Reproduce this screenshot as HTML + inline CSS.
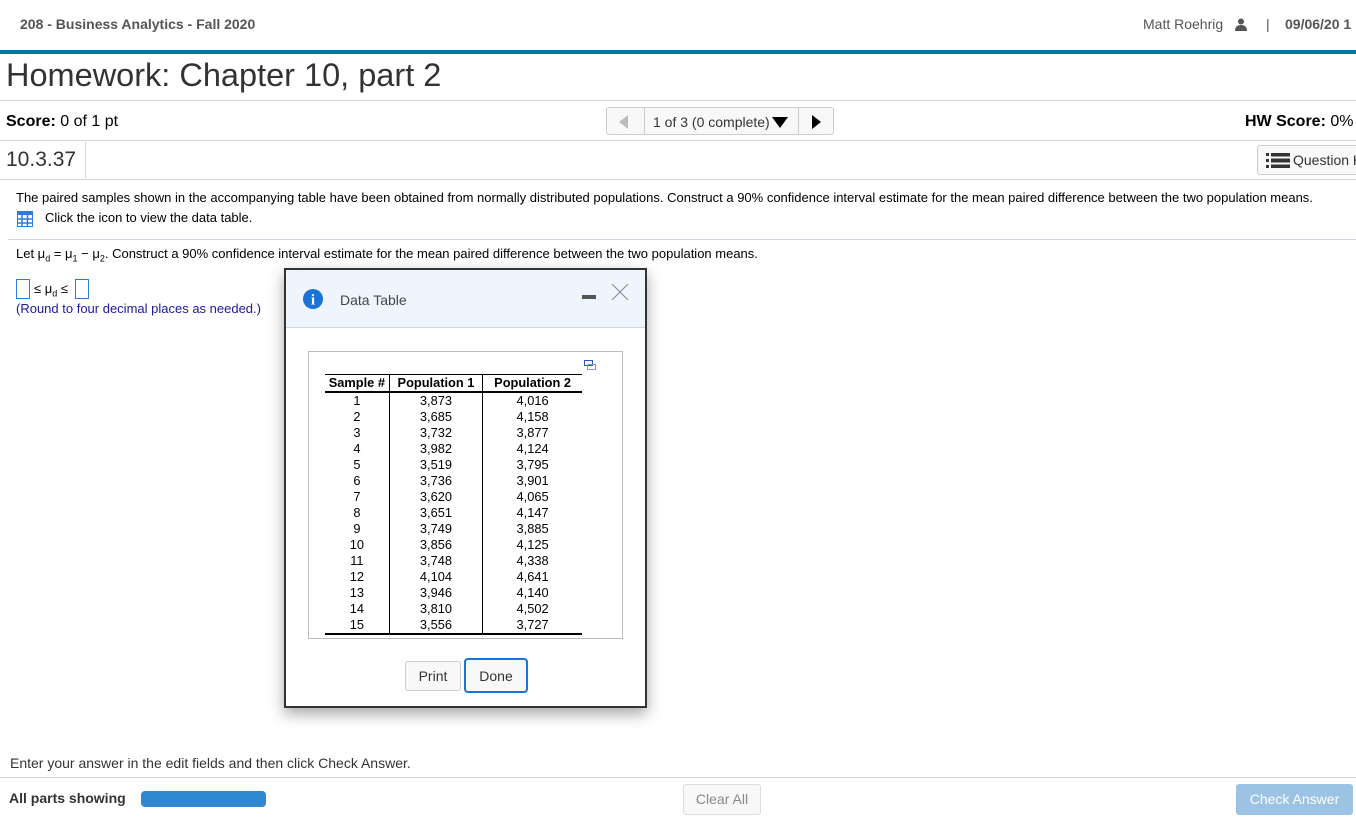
<!DOCTYPE html>
<html><head><meta charset="utf-8"><style>
*{margin:0;padding:0;box-sizing:border-box}
body{width:1356px;height:821px;position:relative;overflow:hidden;background:#fff;font-family:"Liberation Sans",Arial,sans-serif;color:#000}
.a{position:absolute;white-space:nowrap}
.hl{position:absolute;left:0;width:1356px;height:1px;background:#cfd6e0}
table{border-collapse:collapse;font-size:12.8px}
td,th{padding:0;text-align:center;height:16px;line-height:16px}
th{font-weight:bold;border-bottom:2px solid #000;height:17px}
.c1{width:64px}.c2{width:93px;border-left:1px solid #000}.c3{width:99px;border-left:1px solid #000}
</style></head><body>
<div class="a" style="left:20px;top:16px;font-size:14px;font-weight:bold;color:#555">208 - Business Analytics - Fall 2020</div>
<div class="a" style="left:1143px;top:16px;font-size:14px;color:#555">Matt Roehrig</div>
<svg class="a" style="left:1235px;top:18px" width="12" height="13" viewBox="0 0 12 13"><circle cx="6" cy="3.5" r="3" fill="#555"/><path d="M0 13 Q0 7 6 7 Q12 7 12 13Z" fill="#555"/></svg>
<div class="a" style="left:1266px;top:16px;font-size:14px;color:#555">|</div>
<div class="a" style="left:1285px;top:16px;font-size:14px;font-weight:bold;color:#555">09/06/20 1</div>
<div class="a" style="left:0;top:50px;width:1356px;height:4px;background:#00789f"></div>
<div class="a" style="left:6px;top:57px;font-size:32.5px;color:#333">Homework: Chapter 10, part 2</div>
<div class="hl" style="top:100px"></div>
<div class="a" style="left:6px;top:113px;font-size:16px"><b>Score:</b> 0 of 1 pt</div>
<div class="a" style="left:606px;top:107px;width:228px;height:28px;border:1px solid #ccc;border-radius:3px;background:#f8f8f8"></div>
<div class="a" style="left:644px;top:108px;width:1px;height:26px;background:#ccc"></div>
<div class="a" style="left:798px;top:108px;width:1px;height:26px;background:#ccc"></div>
<svg class="a" style="left:619px;top:115px" width="10" height="14"><path d="M9 0V14L0 7Z" fill="#bbb"/></svg>
<div class="a" style="left:653px;top:114px;font-size:14px;color:#333">1 of 3 (0 complete)</div>
<svg class="a" style="left:772px;top:117px" width="16" height="11"><path d="M0 0H16L8 11Z" fill="#000"/></svg>
<svg class="a" style="left:812px;top:115px" width="10" height="14"><path d="M0 0V14L9 7Z" fill="#000"/></svg>
<div class="a" style="left:1245px;top:113px;font-size:16px"><b>HW Score:</b> 0%</div>
<div class="hl" style="top:140px"></div>
<div class="a" style="left:6px;top:148px;font-size:21px;color:#333">10.3.37</div>
<div class="a" style="left:85px;top:142px;width:1px;height:36px;background:#cfd6e0"></div>
<div class="a" style="left:1257px;top:145px;width:110px;height:30px;border:1px solid #ccc;border-radius:3px;background:#f8f8f8"></div>
<svg class="a" style="left:1266px;top:153px" width="24" height="15"><g fill="#333"><rect x="0" y="0" width="3" height="3"/><rect x="0" y="6" width="3" height="3"/><rect x="0" y="12" width="3" height="3"/><rect x="5" y="0" width="19" height="3.5"/><rect x="5" y="5.5" width="19" height="4"/><rect x="5" y="11.5" width="19" height="3.5"/></g></svg>
<div class="a" style="left:1293px;top:152px;font-size:14px;color:#333">Question H</div>
<div class="hl" style="top:179px"></div>
<div class="a" style="left:16px;top:190px;font-size:13px">The paired samples shown in the accompanying table have been obtained from normally distributed populations. Construct a 90% confidence interval estimate for the mean paired difference between the two population means.</div>
<svg class="a" style="left:17px;top:211px" width="16" height="16"><rect x="0.5" y="0.5" width="15" height="15" fill="#fff" stroke="#2e7bd6"/><rect x="0" y="0" width="16" height="4" fill="#2e7bd6"/><g stroke="#2e7bd6" stroke-width="1.5"><path d="M0 8H16M0 12H16M5 0V16M10.5 0V16"/></g></svg>
<div class="a" style="left:45px;top:210px;font-size:13px">Click the icon to view the data table.</div>
<div class="a" style="left:8px;top:239px;width:1348px;height:1px;background:#cfd6e0"></div>
<div class="a" style="left:16px;top:246px;font-size:13px">Let μ<sub style="font-size:9px">d</sub> = μ<sub style="font-size:9px">1</sub> − μ<sub style="font-size:9px">2</sub>. Construct a 90% confidence interval estimate for the mean paired difference between the two population means.</div>
<div class="a" style="left:16px;top:279px;width:14px;height:20px;border:1px solid #2e7bd6"></div>
<div class="a" style="left:34px;top:281px;font-size:13px">≤ μ<sub style="font-size:9px">d</sub> ≤</div>
<div class="a" style="left:75px;top:279px;width:14px;height:20px;border:1px solid #2e7bd6"></div>
<div class="a" style="left:16px;top:301px;font-size:13px;color:#1a1a9c">(Round to four decimal places as needed.)</div>

<div class="a" style="left:284px;top:268px;width:363px;height:440px;border:2px solid #333;background:#fff;box-shadow:0 6px 14px rgba(0,0,0,.35)"></div>
<div class="a" style="left:286px;top:270px;width:359px;height:58px;background:#eef5fd;border-bottom:1px solid #bcdcf4"></div>
<svg class="a" style="left:303px;top:289px" width="20" height="20"><circle cx="10" cy="10" r="10" fill="#1a73d9"/><text x="10" y="15.5" text-anchor="middle" font-family="Liberation Serif" font-weight="bold" font-size="15" fill="#fff">i</text></svg>
<div class="a" style="left:340px;top:292px;font-size:14px;color:#444">Data Table</div>
<div class="a" style="left:582px;top:295px;width:14px;height:4px;background:#555"></div>
<svg class="a" style="left:611px;top:283px" width="18" height="18"><path d="M1 1L17 17M17 1L1 17" stroke="#888" stroke-width="1"/></svg>
<div class="a" style="left:308px;top:351px;width:315px;height:288px;border:1px solid #bbb"></div>
<svg class="a" style="left:584px;top:360px" width="12" height="10"><rect x="0.5" y="0.5" width="8" height="5" fill="none" stroke="#3050c0"/><rect x="3.5" y="4.5" width="8" height="5" fill="none" stroke="#8898d0"/></svg>
<table class="a" style="left:325px;top:374px;width:257px;border-top:1px solid #000">
<tr><th class="c1">Sample #</th><th class="c2">Population 1</th><th class="c3">Population 2</th></tr>
<tr><td class="c1">1</td><td class="c2">3,873</td><td class="c3">4,016</td></tr>
<tr><td class="c1">2</td><td class="c2">3,685</td><td class="c3">4,158</td></tr>
<tr><td class="c1">3</td><td class="c2">3,732</td><td class="c3">3,877</td></tr>
<tr><td class="c1">4</td><td class="c2">3,982</td><td class="c3">4,124</td></tr>
<tr><td class="c1">5</td><td class="c2">3,519</td><td class="c3">3,795</td></tr>
<tr><td class="c1">6</td><td class="c2">3,736</td><td class="c3">3,901</td></tr>
<tr><td class="c1">7</td><td class="c2">3,620</td><td class="c3">4,065</td></tr>
<tr><td class="c1">8</td><td class="c2">3,651</td><td class="c3">4,147</td></tr>
<tr><td class="c1">9</td><td class="c2">3,749</td><td class="c3">3,885</td></tr>
<tr><td class="c1">10</td><td class="c2">3,856</td><td class="c3">4,125</td></tr>
<tr><td class="c1">11</td><td class="c2">3,748</td><td class="c3">4,338</td></tr>
<tr><td class="c1">12</td><td class="c2">4,104</td><td class="c3">4,641</td></tr>
<tr><td class="c1">13</td><td class="c2">3,946</td><td class="c3">4,140</td></tr>
<tr><td class="c1">14</td><td class="c2">3,810</td><td class="c3">4,502</td></tr>
<tr><td class="c1" style="border-bottom:2px solid #000">15</td><td class="c2" style="border-bottom:2px solid #000">3,556</td><td class="c3" style="border-bottom:2px solid #000">3,727</td></tr>
</table>
<div class="a" style="left:405px;top:661px;width:56px;height:30px;border:1px solid #ccc;border-radius:3px;background:#f8f8f8;font-size:14px;color:#333;text-align:center;line-height:28px">Print</div>
<div class="a" style="left:464px;top:658px;width:64px;height:35px;border:2px solid #1a73d9;border-radius:4px;background:#f8f8f8;font-size:14px;color:#333;text-align:center;line-height:33px">Done</div>

<div class="a" style="left:10px;top:755px;font-size:14px;color:#333">Enter your answer in the edit fields and then click Check Answer.</div>
<div class="hl" style="top:777px"></div>
<div class="a" style="left:9px;top:790px;font-size:14px;font-weight:bold;color:#333">All parts showing</div>
<div class="a" style="left:141px;top:791px;width:125px;height:16px;border-radius:4px;background:#2f88d0"></div>
<div class="a" style="left:683px;top:784px;width:78px;height:31px;border:1px solid #ddd;border-radius:3px;background:#f8f8f8;font-size:14px;color:#888;text-align:center;line-height:29px">Clear All</div>
<div class="a" style="left:1236px;top:784px;width:117px;height:31px;border-radius:3px;background:#9cc3e3;font-size:14px;color:#fff;text-align:center;line-height:31px">Check Answer</div>
</body></html>
